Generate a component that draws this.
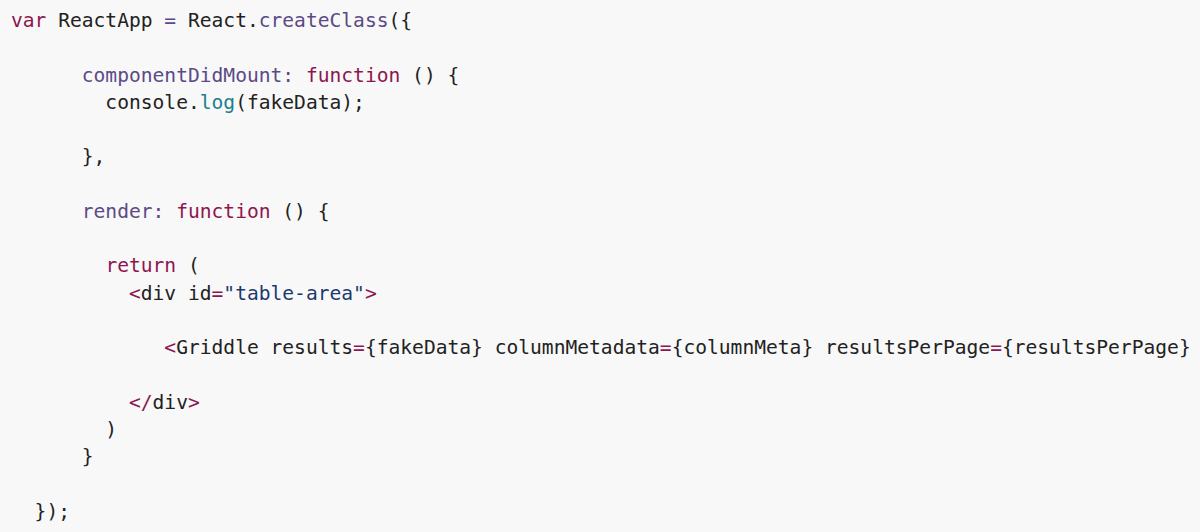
import React from 'react';

// token colours taken from the screenshot
const K = 'text-[#8d1650]'; // keywords, tag brackets, attr "="
const P = 'text-[#5b4a86]'; // properties / methods
const T = 'text-[#1a7f8e]'; // builtin call
const S = 'text-[#1d3a70]'; // strings

const lines = [
  [['var', K], [' ReactApp '], ['=', P], [' React.'], ['createClass', P], ['({']],
  [],
  [['      '], ['componentDidMount:', P], [' '], ['function', K], [' () {']],
  [['        console.'], ['log', T], ['(fakeData);']],
  [],
  [['      },']],
  [],
  [['      '], ['render:', P], [' '], ['function', K], [' () {']],
  [],
  [['        '], ['return', K], [' (']],
  [['          '], ['<', K], ['div id'], ['=', K], ['"table-area"', S], ['>', K]],
  [],
  [
    ['             '], ['<', K], ['Griddle results'], ['=', K], ['{fakeData} columnMetadata'], ['=', K],
    ['{columnMeta} resultsPerPage'], ['=', K], ['{resultsPerPage}'],
  ],
  [],
  [['          '], ['</', K], ['div'], ['>', K]],
  [['        )']],
  [['      }']],
  [],
  [['  });']],
];

export default function App() {
  return (
    <div className="w-[1200px] h-[532px] bg-[#f8f8f8] overflow-hidden">
      <pre className="pl-[11px] pt-[7px] font-['DejaVu_Sans_Mono',monospace] text-[19.6px] leading-[27.28px] text-[#222222] whitespace-pre">
        {lines.map((line, i) => (
          <div key={i} className="h-[27.28px]">
            {line.map(([text, cls], j) => (
              <span key={j} className={cls}>{text}</span>
            ))}
          </div>
        ))}
      </pre>
    </div>
  );
}
